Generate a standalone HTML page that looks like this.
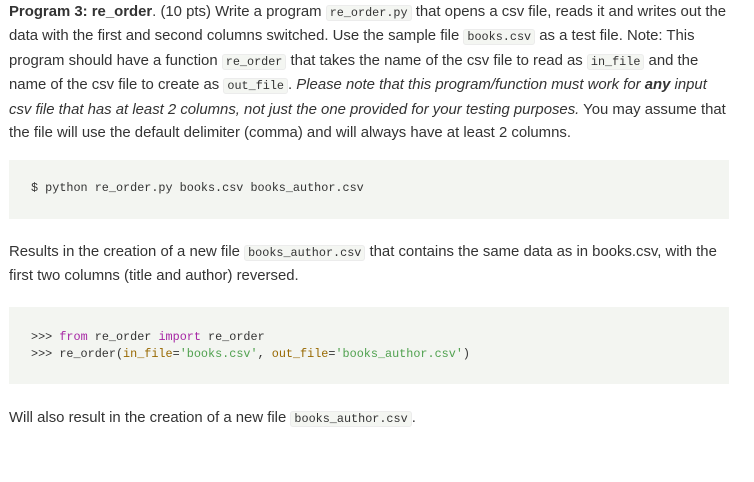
<!DOCTYPE html>
<html><head><style>
body{margin:0;width:754px;height:482px;background:#fff;font-family:"Liberation Sans",sans-serif;color:#333;}
.p{position:absolute;left:9px;width:740px;font-size:14.9px;line-height:23.4px;white-space:nowrap;}
code{font-family:"Liberation Mono",monospace;font-size:11.8px;background:#f4f6f2;border:1px solid #ececec;border-radius:3px;padding:0 3px;color:#333;}
.pre{position:absolute;left:9px;width:720px;background:#f3f5f1;font-family:"Liberation Mono",monospace;font-size:11.8px;color:#333;}
.k{color:#a626a4}.a{color:#986801}.s{color:#50a14f}
</style></head><body>
<div class="p" style="top:1px">
<b>Program 3: re_order</b>. (10 pts) Write a program <code>re_order.py</code> that opens a csv file, reads it and writes out the<br>data with the first and second columns switched. Use the sample file <code>books.csv</code> as a test file. Note: This<br>program should have a function <code>re_order</code> that takes the name of the csv file to read as <code>in_file</code> and the<br>name of the csv file to create as <code>out_file</code>. <i>Please note that this program/function must work for <b>any</b> input</i><br><i>csv file that has at least 2 columns, not just the one provided for your testing purposes.</i> You may assume that<br>the file will use the default delimiter (comma) and will always have at least 2 columns.
</div>
<div class="pre" style="top:160px;height:59px;"><div style="position:absolute;left:22px;top:21px;">$ python re_order.py books.csv books_author.csv</div></div>
<div class="p" style="top:241px">Results in the creation of a new file <code>books_author.csv</code> that contains the same data as in books.csv, with the<br>first two columns (title and author) reversed.</div>
<div class="pre" style="top:307px;height:77px;"><div style="position:absolute;left:22px;top:22px;line-height:17px;">&gt;&gt;&gt; <span class="k">from</span> re_order <span class="k">import</span> re_order<br>&gt;&gt;&gt; re_order(<span class="a">in_file</span>=<span class="s">'books.csv'</span>, <span class="a">out_file</span>=<span class="s">'books_author.csv'</span>)</div></div>
<div class="p" style="top:407px">Will also result in the creation of a new file <code>books_author.csv</code>.</div>
</body></html>
